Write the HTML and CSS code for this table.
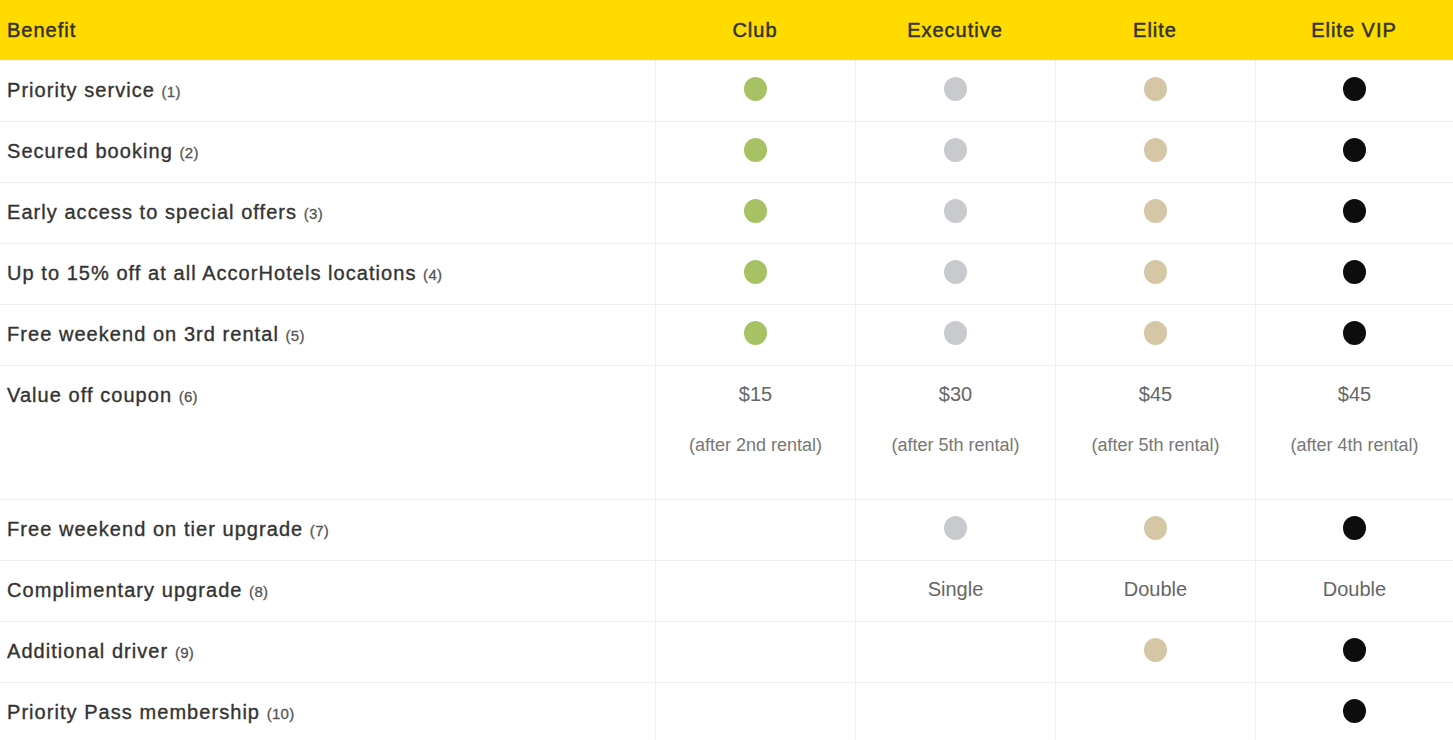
FILE: index.html
```html
<!DOCTYPE html>
<html lang="en">
<head>
<meta charset="utf-8">
<title>Benefits</title>
<link rel="stylesheet" href="styles.css">
</head>
<body>
<div class="table">
  <div class="row head">
    <div class="cell label">Benefit</div>
    <div class="cell">Club</div>
    <div class="cell">Executive</div>
    <div class="cell">Elite</div>
    <div class="cell">Elite VIP</div>
  </div>
  <div class="row">
    <div class="cell label">Priority service <span class="note">(1)</span></div>
    <div class="cell"><span class="dot green"></span></div>
    <div class="cell"><span class="dot grey"></span></div>
    <div class="cell"><span class="dot beige"></span></div>
    <div class="cell"><span class="dot black"></span></div>
  </div>
  <div class="row">
    <div class="cell label">Secured booking <span class="note">(2)</span></div>
    <div class="cell"><span class="dot green"></span></div>
    <div class="cell"><span class="dot grey"></span></div>
    <div class="cell"><span class="dot beige"></span></div>
    <div class="cell"><span class="dot black"></span></div>
  </div>
  <div class="row">
    <div class="cell label">Early access to special offers <span class="note">(3)</span></div>
    <div class="cell"><span class="dot green"></span></div>
    <div class="cell"><span class="dot grey"></span></div>
    <div class="cell"><span class="dot beige"></span></div>
    <div class="cell"><span class="dot black"></span></div>
  </div>
  <div class="row">
    <div class="cell label">Up to 15% off at all AccorHotels locations <span class="note">(4)</span></div>
    <div class="cell"><span class="dot green"></span></div>
    <div class="cell"><span class="dot grey"></span></div>
    <div class="cell"><span class="dot beige"></span></div>
    <div class="cell"><span class="dot black"></span></div>
  </div>
  <div class="row">
    <div class="cell label">Free weekend on 3rd rental <span class="note">(5)</span></div>
    <div class="cell"><span class="dot green"></span></div>
    <div class="cell"><span class="dot grey"></span></div>
    <div class="cell"><span class="dot beige"></span></div>
    <div class="cell"><span class="dot black"></span></div>
  </div>
  <div class="row tall">
    <div class="cell label">Value off coupon <span class="note">(6)</span></div>
    <div class="cell value">$15<span class="sub">(after 2nd rental)</span></div>
    <div class="cell value">$30<span class="sub">(after 5th rental)</span></div>
    <div class="cell value">$45<span class="sub">(after 5th rental)</span></div>
    <div class="cell value">$45<span class="sub">(after 4th rental)</span></div>
  </div>
  <div class="row">
    <div class="cell label">Free weekend on tier upgrade <span class="note">(7)</span></div>
    <div class="cell"></div>
    <div class="cell"><span class="dot grey"></span></div>
    <div class="cell"><span class="dot beige"></span></div>
    <div class="cell"><span class="dot black"></span></div>
  </div>
  <div class="row">
    <div class="cell label">Complimentary upgrade <span class="note">(8)</span></div>
    <div class="cell"></div>
    <div class="cell value">Single</div>
    <div class="cell value">Double</div>
    <div class="cell value">Double</div>
  </div>
  <div class="row">
    <div class="cell label">Additional driver <span class="note">(9)</span></div>
    <div class="cell"></div>
    <div class="cell"></div>
    <div class="cell"><span class="dot beige"></span></div>
    <div class="cell"><span class="dot black"></span></div>
  </div>
  <div class="row">
    <div class="cell label">Priority Pass membership <span class="note">(10)</span></div>
    <div class="cell"></div>
    <div class="cell"></div>
    <div class="cell"></div>
    <div class="cell"><span class="dot black"></span></div>
  </div>
</div>
</body>
</html>
```
FILE: styles.css
```css
html, body {
  margin: 0;
  padding: 0;
  background: #ffffff;
}

body {
  font-family: "Liberation Sans", Arial, sans-serif;
  color: #333333;
  overflow: hidden;
}

.table {
  width: 1453px;
}

.row {
  display: grid;
  grid-template-columns: 655px 200px 200px 200px 1fr;
  border-bottom: 1px solid #efefef;
}

.cell {
  box-sizing: border-box;
  height: 60px;
  padding: 18px 7px;
  line-height: 24px;
  text-align: center;
  border-left: 1px solid #efefef;
}

.cell.label {
  text-align: left;
  border-left: none;
  font-size: 20px;
  letter-spacing: 1.05px;
  color: #333333;
  -webkit-text-stroke: 0.35px #333333;
  padding-top: 17px;
}

.head {
  background: #ffdb00;
  height: 60px;
  border-bottom: 1px solid #f3f3f3;
}

.head .cell {
  border-left: none;
  padding: 0 7px;
  height: 60px;
  line-height: 60px;
  font-size: 20px;
  letter-spacing: 1px;
  color: #333333;
  -webkit-text-stroke: 0.5px #333333;
}

.note {
  font-size: 15px;
  line-height: 1;
  letter-spacing: 0.3px;
  color: #555555;
  -webkit-text-stroke: 0.3px #555555;
}

.dot {
  display: block;
  width: 23px;
  height: 24px;
  margin: -2px auto 0;
  border-radius: 50%;
}

.green { background: #a6c264; }
.grey { background: #c8cacd; }
.beige { background: #d5c6a6; }
.black { background: #0d0d0d; }

.value {
  font-size: 20px;
  color: #666666;
  padding-top: 16px;
}

.sub {
  display: block;
  margin-top: 27px;
  font-size: 18px;
  color: #777777;
}

.tall .cell {
  height: 133px;
}
```
